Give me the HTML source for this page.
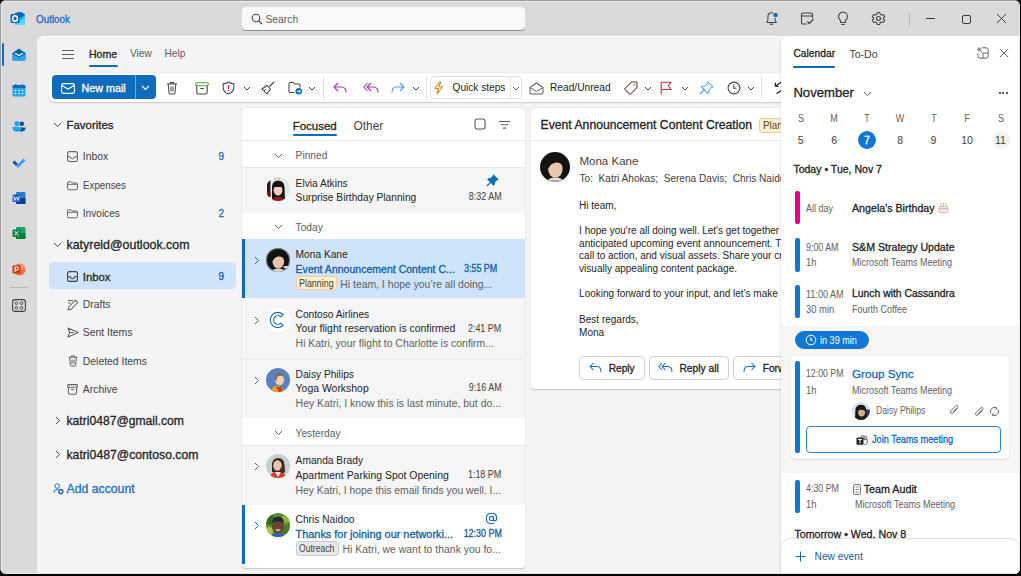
<!DOCTYPE html>
<html><head><meta charset="utf-8">
<style>
*{box-sizing:border-box;margin:0;padding:0}
html,body{width:1021px;height:576px;overflow:hidden;background:#000;font-family:"Liberation Sans",sans-serif;color:#242424}
.a{position:absolute}
.t{position:absolute;white-space:nowrap;line-height:14px;height:14px;margin-top:0.9px}
#win{position:absolute;left:0;top:0;width:1020px;height:574px;border-radius:6px;background:#dadada;overflow:hidden;box-shadow:inset 0 0 0 1px #9c9c9c}
#win2{position:absolute;left:1px;top:1px;right:0;bottom:0;border-radius:5px;box-shadow:inset 0 0 0 1px #e9e9e9}
svg{position:absolute;overflow:visible}
</style></head>
<body>
<div id="win">
  
  <!-- TITLE BAR -->
  <svg style="left:10px;top:11px" width="16" height="15" viewBox="0 0 16 15">
    <path d="M5 2 L11 1 L15 3.5 L15 13 Q15 14 14 14 L6 14 Q5 14 5 13Z" fill="#28a8ea"/>
    <path d="M5 2 L11 1 L15 3.5 L10 7 L5 5Z" fill="#0364b8"/>
    <path d="M5 14 L15 6 L15 13 Q15 14 14 14Z" fill="#50d9ff"/>
    <rect x="0.5" y="3" width="9" height="9" rx="1" fill="#0f6cbd"/>
    <ellipse cx="5" cy="7.5" rx="2.4" ry="2.8" fill="none" stroke="#fff" stroke-width="1.4"/>
  </svg>
  <div class="t" style="left:36px;top:12px;font-size:10.0px;font-weight:400;-webkit-text-stroke:0.3px #1a6dbd;color:#1a6dbd;transform:scaleX(0.9860);transform-origin:left center">Outlook</div>
  <div class="a" style="left:242px;top:7px;width:283px;height:23px;background:#f9f9f9;border-radius:4px;box-shadow:0 1px 0 #8d8d8d, 0 0 0 0.5px #e2e2e2"></div>
  <svg style="left:251px;top:13px" width="12" height="12" viewBox="0 0 12 12"><circle cx="5" cy="5" r="3.8" fill="none" stroke="#424242" stroke-width="1.1"/><path d="M7.8 7.8 L11 11" stroke="#424242" stroke-width="1.2"/></svg>
  <div class="t" style="left:265.5px;top:12px;font-size:10.3px;color:#5c5c5c">Search</div>
  <!-- bell -->
  <svg style="left:765px;top:11px" width="14" height="15" viewBox="0 0 14 15"><path d="M6.5 1.8 C4.3 1.8 2.9 3.6 2.9 5.9 L2.9 8.9 L1.8 11.4 L11.2 11.4 L10.1 8.9 L10.1 5.9 C10.1 3.6 8.7 1.8 6.5 1.8Z" fill="none" stroke="#424242" stroke-width="1.05" stroke-linejoin="round"/><path d="M4.9 12.7 Q6.5 14.3 8.1 12.7" fill="none" stroke="#424242" stroke-width="1.05"/><circle cx="10.6" cy="3.9" r="3" fill="#dadada"/><circle cx="10.6" cy="3.9" r="2.2" fill="#0f6cbd"/></svg>
  <!-- calendar check -->
  <svg style="left:800px;top:11px" width="15" height="15" viewBox="0 0 15 15"><path d="M7 13 L3 13 Q1.5 13 1.5 11.5 L1.5 3.5 Q1.5 2 3 2 L11 2 Q12.5 2 12.5 3.5 L12.5 7" fill="none" stroke="#424242" stroke-width="1.1"/><path d="M1.5 5 L12.5 5" stroke="#424242" stroke-width="1.1"/><path d="M7.5 10.5 L9.3 12.5 L13.5 8" fill="none" stroke="#424242" stroke-width="1.2"/></svg>
  <!-- bulb -->
  <svg style="left:837px;top:11px" width="12" height="15" viewBox="0 0 12 15"><path d="M6 1.3 C3.2 1.3 1.5 3.3 1.5 5.6 C1.5 7.6 3 8.6 3.6 10 L3.8 11.5 L8.2 11.5 L8.4 10 C9 8.6 10.5 7.6 10.5 5.6 C10.5 3.3 8.8 1.3 6 1.3Z" fill="none" stroke="#424242" stroke-width="1.1"/><path d="M4.3 13.5 L7.7 13.5" stroke="#424242" stroke-width="1.1"/></svg>
  <!-- gear -->
  <svg style="left:871px;top:11px" width="15" height="15" viewBox="0 0 15 15"><path d="M6.2 1.5 L8.8 1.5 L9.2 3.3 L10.6 4.1 L12.4 3.5 L13.7 5.8 L12.3 7 L12.3 8 L13.7 9.2 L12.4 11.5 L10.6 10.9 L9.2 11.7 L8.8 13.5 L6.2 13.5 L5.8 11.7 L4.4 10.9 L2.6 11.5 L1.3 9.2 L2.7 8 L2.7 7 L1.3 5.8 L2.6 3.5 L4.4 4.1 L5.8 3.3Z" fill="none" stroke="#424242" stroke-width="1.05" stroke-linejoin="round"/><circle cx="7.5" cy="7.5" r="2" fill="none" stroke="#424242" stroke-width="1.05"/></svg>
  <div class="a" style="left:909px;top:13px;width:1px;height:13px;background:#b5b5b5"></div>
  <div class="a" style="left:926px;top:18px;width:9px;height:1px;background:#3a3a3a"></div>
  <div class="a" style="left:961.5px;top:14.5px;width:9px;height:9px;border:1px solid #3a3a3a;border-radius:2px"></div>
  <svg style="left:996px;top:13px" width="11" height="11" viewBox="0 0 11 11"><path d="M1 1 L10 10 M10 1 L1 10" stroke="#3a3a3a" stroke-width="1"/></svg>

  <!-- LEFT RAIL -->
  <div class="a" style="left:2px;top:43px;width:2px;height:23px;background:#0f6cbd;border-radius:1px"></div>
  <svg style="left:12px;top:48px" width="14" height="13" viewBox="0 0 14 13"><path d="M0.5 5 L7 0.5 L13.5 5 L13.5 11.5 Q13.5 12.5 12.5 12.5 L1.5 12.5 Q0.5 12.5 0.5 11.5Z" fill="#0a5fb6"/><path d="M0.5 6 L7 9.5 L13.5 6 L13.5 11.5 Q13.5 12.5 12.5 12.5 L1.5 12.5 Q0.5 12.5 0.5 11.5Z" fill="#28a8ea"/><path d="M3 5.3 L7 7.6 L11 5.3" fill="none" stroke="#fff" stroke-width="1.3"/></svg>
  <svg style="left:12px;top:84px" width="14" height="13" viewBox="0 0 14 13"><rect x="0.5" y="1" width="13" height="11.5" rx="1.5" fill="#28a8ea"/><rect x="0.5" y="1" width="13" height="3" rx="1" fill="#0f6cbd"/><g fill="#fff"><circle cx="3.5" cy="6.5" r=".8"/><circle cx="7" cy="6.5" r=".8"/><circle cx="10.5" cy="6.5" r=".8"/><circle cx="3.5" cy="9.5" r=".8"/><circle cx="7" cy="9.5" r=".8"/><circle cx="10.5" cy="9.5" r=".8"/></g><rect x="3" y="0" width="1.4" height="2.5" fill="#0f6cbd"/><rect x="9.6" y="0" width="1.4" height="2.5" fill="#0f6cbd"/></svg>
  <svg style="left:12px;top:121px" width="14" height="11" viewBox="0 0 14 11"><circle cx="9.8" cy="2.8" r="2.3" fill="#0f4c9e"/><path d="M7.5 6.5 L13.5 6.5 Q13.8 10 10 10.5 L7.5 10.5Z" fill="#0f4c9e"/><circle cx="5" cy="2.6" r="2.6" fill="#2aa0e8"/><path d="M0.5 6.5 Q0.5 5.8 1.3 5.8 L8.7 5.8 Q9.5 5.8 9.5 6.5 Q9.5 10.8 5 10.8 Q0.5 10.8 0.5 6.5Z" fill="#2aa0e8"/></svg>
  <svg style="left:12px;top:156px" width="14" height="12" viewBox="0 0 14 12"><path d="M0.5 6.5 L2.5 4.5 L6 8 L4 10Z" fill="#0f4ea6"/><path d="M4 10 L11.5 2.5 L13.5 4.5 L6 12 Z" fill="#36a3f0"/></svg>
  <svg style="left:12px;top:192px" width="14" height="12" viewBox="0 0 14 12"><rect x="4" y="0" width="9.5" height="12" rx="1" fill="#2b7cd3"/><rect x="4" y="6" width="9.5" height="6" rx="1" fill="#103f91"/><rect x="0.5" y="2.5" width="8" height="7.5" rx="1" fill="#185abd"/><path d="M1.7 4 L2.8 8.5 L4.5 5 L6.2 8.5 L7.3 4" fill="none" stroke="#fff" stroke-width=".9"/></svg>
  <svg style="left:12px;top:227px" width="14" height="12" viewBox="0 0 14 12"><rect x="4" y="0" width="9.5" height="12" rx="1" fill="#21a366"/><rect x="4" y="6" width="9.5" height="6" rx="1" fill="#107c41"/><rect x="0.5" y="2.5" width="8" height="7.5" rx="1" fill="#107c41"/><path d="M2.5 4 L6.5 8.5 M6.5 4 L2.5 8.5" fill="none" stroke="#fff" stroke-width="1"/></svg>
  <svg style="left:12px;top:263px" width="14" height="13" viewBox="0 0 14 13"><circle cx="7.5" cy="6.5" r="6" fill="#ed6c47"/><path d="M7.5 0.5 A6 6 0 0 1 13.5 6.5 L7.5 6.5Z" fill="#ff8f6b"/><rect x="0.5" y="2.5" width="8" height="8" rx="1" fill="#c43e1c"/><path d="M3 9 L3 4 L5 4 Q6.5 4 6.5 5.5 Q6.5 7 5 7 L3 7" fill="none" stroke="#fff" stroke-width="1"/></svg>
  <div class="a" style="left:10px;top:287px;width:18px;height:1px;background:#b9b9b9"></div>
  <svg style="left:12px;top:299px" width="14" height="13" viewBox="0 0 14 13"><rect x="0.6" y="0.6" width="12.8" height="11.8" rx="2.5" fill="none" stroke="#424242" stroke-width="1.1"/><g fill="none" stroke="#424242" stroke-width=".9"><rect x="3.2" y="3" width="2.6" height="2.4" rx="1"/><rect x="8.2" y="3" width="2.6" height="2.4" rx="1"/><rect x="3.2" y="7.6" width="2.6" height="2.4" rx="1"/><circle cx="9.5" cy="8.8" r="1.3"/></g></svg>

  <!-- main area -->
  <div class="a" style="left:37px;top:36px;width:983px;height:538px;background:#f4f4f4;border-top-left-radius:7px;box-shadow:inset 0 1px 0 rgba(255,255,255,.6)"></div>
  <!-- toolbar -->
  <div class="a" style="left:49px;top:73px;width:740px;height:29px;background:#fff;border-radius:5px;box-shadow:0 0.5px 1.5px rgba(0,0,0,.18)"></div>

  <!-- RIBBON TABS -->
  <div class="a" style="left:62px;top:49.5px;width:12px;height:1.2px;background:#616161"></div>
  <div class="a" style="left:62px;top:53.7px;width:12px;height:1.2px;background:#616161"></div>
  <div class="a" style="left:62px;top:57.9px;width:12px;height:1.2px;background:#616161"></div>
  <div class="t" style="left:89px;top:46.6px;font-size:10.52px;font-weight:400;-webkit-text-stroke:0.3px #242424;color:#242424">Home</div>
  <div class="a" style="left:89px;top:65px;width:29px;height:2px;background:#0f6cbd;border-radius:1px"></div>
  <div class="t" style="left:130px;top:46.6px;font-size:10.2px;color:#5c5c5c">View</div>
  <div class="t" style="left:164.5px;top:46.6px;font-size:10.1px;color:#5c5c5c">Help</div>
  <!-- TOOLBAR -->
  <div class="a" style="left:52px;top:75px;width:104px;height:24px;background:#0f6cbd;border-radius:4px"></div>
  <div class="a" style="left:135px;top:75px;width:1px;height:24px;background:#6ea3d9"></div>
  <svg style="left:61px;top:82.8px" width="14" height="11" viewBox="0 0 14 11"><rect x="0.6" y="0.6" width="12.8" height="9.8" rx="1.8" fill="none" stroke="#fff" stroke-width="1.1"/><path d="M1 2.5 L7 6 L13 2.5" fill="none" stroke="#fff" stroke-width="1.1"/></svg>
  <div class="t" style="left:81.5px;top:80.3px;font-size:10.75px;font-weight:400;-webkit-text-stroke:0.3px #fff;color:#fff">New mail</div>
  <svg style="left:141px;top:84.8px" width="9" height="6" viewBox="0 0 9 6"><path d="M1 1 L4.5 4.5 L8 1" fill="none" stroke="#fff" stroke-width="1.1"/></svg>
  <!-- trash -->
  <svg style="left:166px;top:80.8px" width="12" height="14" viewBox="0 0 12 14"><path d="M1 3 L11 3 M4.3 3 L4.3 1.5 L7.7 1.5 L7.7 3 M2.2 3 L3 12 Q3.1 13 4 13 L8 13 Q8.9 13 9 12 L9.8 3" fill="none" stroke="#424242" stroke-width="1.05"/><path d="M5 5.5 L5 10.5 M7 5.5 L7 10.5" stroke="#424242" stroke-width="1"/></svg>
  <!-- archive -->
  <svg style="left:195px;top:81.8px" width="14" height="13" viewBox="0 0 14 13"><rect x="0.8" y="0.8" width="12.4" height="3" rx="1" fill="none" stroke="#5ba33b" stroke-width="1.1"/><path d="M1.8 3.8 L1.8 10.5 Q1.8 12 3.3 12 L10.7 12 Q12.2 12 12.2 10.5 L12.2 3.8" fill="none" stroke="#424242" stroke-width="1.05"/><path d="M5.2 6.5 L8.8 6.5" stroke="#424242" stroke-width="1.05"/></svg>
  <!-- shield -->
  <svg style="left:222px;top:80.8px" width="13" height="14" viewBox="0 0 13 14"><path d="M6.5 1 Q3.8 2.8 1.2 2.8 L1.2 6.8 Q1.2 11 6.5 13 Q11.8 11 11.8 6.8 L11.8 2.8 Q9.2 2.8 6.5 1Z" fill="none" stroke="#424242" stroke-width="1.05"/><path d="M6.5 4.2 L6.5 8" stroke="#c50f1f" stroke-width="1.2"/><circle cx="6.5" cy="9.8" r=".7" fill="#c50f1f"/></svg>
  <svg style="left:243px;top:85.8px" width="8" height="5" viewBox="0 0 8 5"><path d="M1 1 L4 4 L7 1" fill="none" stroke="#424242" stroke-width="1"/></svg>
  <!-- sweep -->
  <svg style="left:261px;top:80.8px" width="14" height="14" viewBox="0 0 14 14"><path d="M13 1 L8.5 5.5" stroke="#424242" stroke-width="1.1"/><path d="M6 4.5 L9.5 8 L6 13 L1 8Z" fill="none" stroke="#424242" stroke-width="1.05" stroke-linejoin="round"/><path d="M3 10 L4.5 8.5" stroke="#424242" stroke-width="1"/></svg>
  <!-- move folder -->
  <svg style="left:288px;top:80.8px" width="15" height="14" viewBox="0 0 15 14"><path d="M6.5 11.5 L2.5 11.5 Q1 11.5 1 10 L1 3 Q1 1.5 2.5 1.5 L5 1.5 L6.5 3 L10.5 3 Q12 3 12 4.5 L12 6.5" fill="none" stroke="#424242" stroke-width="1.05"/><circle cx="10.8" cy="10.3" r="3.3" fill="#0f6cbd"/><path d="M9 10.3 L12.3 10.3 M11 8.8 L12.5 10.3 L11 11.8" fill="none" stroke="#fff" stroke-width=".9"/></svg>
  <svg style="left:308px;top:85.8px" width="8" height="5" viewBox="0 0 8 5"><path d="M1 1 L4 4 L7 1" fill="none" stroke="#424242" stroke-width="1"/></svg>
  <div class="a" style="left:322.5px;top:76px;width:1px;height:23px;background:#e0e0e0"></div>
  <!-- reply -->
  <svg style="left:333px;top:81.8px" width="14" height="12" viewBox="0 0 14 12"><path d="M5 1 L1 5 L5 9 M1 5 L8.5 5 Q13 5 13 10.5" fill="none" stroke="#a53bb5" stroke-width="1.1" stroke-linejoin="round"/></svg>
  <!-- reply all -->
  <svg style="left:363px;top:81.8px" width="16" height="12" viewBox="0 0 16 12"><path d="M4.5 1 L0.8 5 L4.5 9 M8 1 L4 5 L8 9 M4 5 L10.5 5 Q15 5 15 10.5" fill="none" stroke="#a53bb5" stroke-width="1.1" stroke-linejoin="round"/></svg>
  <!-- forward -->
  <svg style="left:391px;top:81.8px" width="14" height="12" viewBox="0 0 14 12"><path d="M9 1 L13 5 L9 9 M13 5 L5.5 5 Q1 5 1 10.5" fill="none" stroke="#4a9ee8" stroke-width="1.1" stroke-linejoin="round"/></svg>
  <svg style="left:412px;top:85.8px" width="8" height="5" viewBox="0 0 8 5"><path d="M1 1 L4 4 L7 1" fill="none" stroke="#424242" stroke-width="1"/></svg>
  <div class="a" style="left:425.5px;top:76px;width:1px;height:23px;background:#e0e0e0"></div>
  <!-- quick steps -->
  <div class="a" style="left:429.5px;top:75.5px;width:92.5px;height:23px;border:1px solid #e3e3e3;border-radius:4px"></div>
  <div class="a" style="left:509.5px;top:76px;width:1px;height:22px;background:#e3e3e3"></div>
  <svg style="left:433px;top:80.8px" width="11" height="14" viewBox="0 0 11 14"><path d="M6.5 1 L2 7.5 L5.5 7.5 L4 13 L9.5 5.8 L6 5.8 L7.8 1Z" fill="none" stroke="#c98a1a" stroke-width="1.05" stroke-linejoin="round"/></svg>
  <div class="t" style="left:452.5px;top:80.6px;font-size:10.15px;color:#242424">Quick steps</div>
  <svg style="left:512px;top:85.8px" width="8" height="5" viewBox="0 0 8 5"><path d="M1 1 L4 4 L7 1" fill="none" stroke="#616161" stroke-width="1"/></svg>
  <!-- read/unread -->
  <svg style="left:529px;top:81.8px" width="15" height="13" viewBox="0 0 15 13"><path d="M1 5.5 L7.5 1 L14 5.5 L14 10.5 Q14 12 12.5 12 L2.5 12 Q1 12 1 10.5Z" fill="none" stroke="#616161" stroke-width="1.05" stroke-linejoin="round"/><path d="M1.5 6 L7.5 9.3 L13.5 6" fill="none" stroke="#616161" stroke-width="1"/></svg>
  <div class="t" style="left:550px;top:80.6px;font-size:10.2px;color:#242424">Read/Unread</div>
  <!-- tag -->
  <svg style="left:624px;top:80.8px" width="14" height="14" viewBox="0 0 14 14"><path d="M7.5 1 L12.5 1 Q13 1 13 1.5 L13 6.5 L6.5 13 Q6 13.5 5.5 13 L1 8.5 Q0.5 8 1 7.5Z" fill="none" stroke="#424242" stroke-width="1.05" stroke-linejoin="round"/><circle cx="10.3" cy="3.7" r=".9" fill="#e8590c"/></svg>
  <svg style="left:644px;top:85.8px" width="8" height="5" viewBox="0 0 8 5"><path d="M1 1 L4 4 L7 1" fill="none" stroke="#424242" stroke-width="1"/></svg>
  <!-- flag -->
  <svg style="left:660px;top:80.8px" width="12" height="14" viewBox="0 0 12 14"><path d="M1.2 13.5 L1.2 1.2 L11 1.2 L8.3 4.8 L11 8.5 L1.2 8.5" fill="none" stroke="#c4314b" stroke-width="1.1" stroke-linejoin="round"/></svg>
  <svg style="left:681px;top:85.8px" width="8" height="5" viewBox="0 0 8 5"><path d="M1 1 L4 4 L7 1" fill="none" stroke="#424242" stroke-width="1"/></svg>
  <!-- pin -->
  <svg style="left:699px;top:80.8px" width="15" height="14" viewBox="0 0 15 14"><path d="M9 1 L14 6 L12.5 6.5 L10 9 L9.8 11.5 L8.8 12.3 L2.7 6.2 L3.5 5.2 L6 5 L8.5 2.5Z" fill="none" stroke="#479ef5" stroke-width="1.05" stroke-linejoin="round"/><path d="M5.3 8.7 L1 13" stroke="#479ef5" stroke-width="1.1"/></svg>
  <!-- clock -->
  <svg style="left:727px;top:80.8px" width="14" height="14" viewBox="0 0 14 14"><circle cx="7" cy="7" r="5.9" fill="none" stroke="#424242" stroke-width="1.1"/><path d="M6.8 3.5 L6.8 7.3 L9.3 7.3" fill="none" stroke="#424242" stroke-width="1.05"/></svg>
  <svg style="left:747px;top:85.8px" width="8" height="5" viewBox="0 0 8 5"><path d="M1 1 L4 4 L7 1" fill="none" stroke="#424242" stroke-width="1"/></svg>
  <div class="a" style="left:760.5px;top:75.5px;width:1px;height:23px;background:#e0e0e0"></div>
  <svg style="left:770px;top:78.8px" width="14" height="18" viewBox="0 0 14 18"><path d="M11.5 3 L5.5 7 M5.5 3.8 L5.3 7.1 L8.6 7.3" fill="none" stroke="#242424" stroke-width="1.2"/><path d="M6.5 14.8 L11.5 11.2" stroke="#242424" stroke-width="1.1"/></svg>


  <!-- FOLDER PANE -->
  <svg style="left:53px;top:122px" width="9" height="6" viewBox="0 0 9 6"><path d="M1 1 L4.5 4.5 L8 1" fill="none" stroke="#424242" stroke-width="1"/></svg>
  <div class="t" style="left:66.5px;top:117.2px;font-size:11.46px;font-weight:400;-webkit-text-stroke:0.3px #242424;color:#242424">Favorites</div>
  <!-- inbox fav -->
  <svg style="left:67px;top:151px" width="11" height="11" viewBox="0 0 11 11"><rect x="0.6" y="0.6" width="9.8" height="9.8" rx="2" fill="none" stroke="#616161" stroke-width="1.05"/><path d="M0.8 5.8 L3.5 5.8 Q3.8 7.8 5.5 7.8 Q7.2 7.8 7.5 5.8 L10.2 5.8" fill="none" stroke="#616161" stroke-width="1"/></svg>
  <div class="t" style="left:82.8px;top:149.5px;font-size:10.4px;color:#424242">Inbox</div>
  <div class="t" style="left:218.5px;top:149.5px;font-size:10.00px;font-weight:400;-webkit-text-stroke:0.3px #1d6fc0;color:#1d6fc0">9</div>
  <svg style="left:67px;top:180.5px" width="11" height="9.5" viewBox="0 0 12 10"><path d="M0.6 2 Q0.6 0.6 2 0.6 L4.3 0.6 L5.6 2 L10 2 Q11.4 2 11.4 3.4 L11.4 8 Q11.4 9.4 10 9.4 L2 9.4 Q0.6 9.4 0.6 8Z M0.6 3.4 L11.4 3.4" fill="none" stroke="#616161" stroke-width="1.05"/></svg>
  <div class="t" style="left:82.8px;top:178.5px;font-size:10.0px;color:#424242;transform:scaleX(0.9750);transform-origin:left center">Expenses</div>
  <svg style="left:67px;top:208.5px" width="11" height="9.5" viewBox="0 0 12 10"><path d="M0.6 2 Q0.6 0.6 2 0.6 L4.3 0.6 L5.6 2 L10 2 Q11.4 2 11.4 3.4 L11.4 8 Q11.4 9.4 10 9.4 L2 9.4 Q0.6 9.4 0.6 8Z M0.6 3.4 L11.4 3.4" fill="none" stroke="#616161" stroke-width="1.05"/></svg>
  <div class="t" style="left:82.8px;top:206.5px;font-size:10.1px;color:#424242">Invoices</div>
  <div class="t" style="left:218.5px;top:206.5px;font-size:10.00px;font-weight:400;-webkit-text-stroke:0.3px #1d6fc0;color:#1d6fc0">2</div>
  <!-- account -->
  <svg style="left:53px;top:242px" width="9" height="6" viewBox="0 0 9 6"><path d="M1 1 L4.5 4.5 L8 1" fill="none" stroke="#424242" stroke-width="1"/></svg>
  <div class="t" style="left:66.5px;top:237.5px;font-size:12.43px;font-weight:400;-webkit-text-stroke:0.3px #242424;color:#242424">katyreid@outlook.com</div>
  <div class="a" style="left:48.5px;top:262px;width:187.5px;height:27px;background:#cfe4fa;border-radius:4px"></div>
  <svg style="left:67px;top:270.5px" width="11" height="11" viewBox="0 0 11 11"><rect x="0.6" y="0.6" width="9.8" height="9.8" rx="2" fill="none" stroke="#424242" stroke-width="1.1"/><path d="M0.8 5.8 L3.5 5.8 Q3.8 7.8 5.5 7.8 Q7.2 7.8 7.5 5.8 L10.2 5.8" fill="none" stroke="#424242" stroke-width="1.05"/></svg>
  <div class="t" style="left:82.8px;top:269px;font-size:11.34px;font-weight:400;-webkit-text-stroke:0.3px #242424;color:#242424">Inbox</div>
  <div class="t" style="left:218.5px;top:269px;font-size:10.00px;font-weight:400;-webkit-text-stroke:0.3px #115ea3;color:#115ea3">9</div>
  <svg style="left:66.5px;top:298.5px" width="12" height="12" viewBox="0 0 12 12"><path d="M8.5 1.2 L10.8 3.5 L4 10.3 L1 11 L1.7 8Z M1 1.5 L6 1.5 M1 4 L3.5 4" fill="none" stroke="#616161" stroke-width="1.05" stroke-linejoin="round"/></svg>
  <div class="t" style="left:82.8px;top:297.5px;font-size:10.4px;color:#424242">Drafts</div>
  <svg style="left:66.5px;top:327px" width="12" height="11" viewBox="0 0 12 11"><path d="M1 1 L11.2 5.5 L1 10 L2.6 5.5Z M2.6 5.5 L7 5.5" fill="none" stroke="#616161" stroke-width="1.05" stroke-linejoin="round"/></svg>
  <div class="t" style="left:82.8px;top:325.5px;font-size:10.4px;color:#424242">Sent Items</div>
  <svg style="left:67.5px;top:355px" width="10" height="12" viewBox="0 0 10 12"><path d="M0.6 2.2 L9.4 2.2 M3.5 2.2 L3.5 0.9 L6.5 0.9 L6.5 2.2 M1.6 2.2 L2.3 10 Q2.4 11 3.3 11 L6.7 11 Q7.6 11 7.7 10 L8.4 2.2 M4 4.5 L4 8.8 M6 4.5 L6 8.8" fill="none" stroke="#616161" stroke-width="1"/></svg>
  <div class="t" style="left:82.8px;top:354px;font-size:10.4px;color:#424242">Deleted Items</div>
  <svg style="left:67px;top:384px" width="11" height="11" viewBox="0 0 11 11"><rect x="0.6" y="0.6" width="9.8" height="2.6" rx=".8" fill="none" stroke="#616161" stroke-width="1.05"/><path d="M1.4 3.2 L1.4 8.8 Q1.4 10.2 2.8 10.2 L8.2 10.2 Q9.6 10.2 9.6 8.8 L9.6 3.2 M4 5.5 L7 5.5" fill="none" stroke="#616161" stroke-width="1.05"/></svg>
  <div class="t" style="left:82.8px;top:382.5px;font-size:10.4px;color:#424242">Archive</div>
  <svg style="left:55px;top:416px" width="6" height="9" viewBox="0 0 6 9"><path d="M1 1 L4.5 4.5 L1 8" fill="none" stroke="#424242" stroke-width="1"/></svg>
  <div class="t" style="left:66.5px;top:413.5px;font-size:12.13px;font-weight:400;-webkit-text-stroke:0.3px #242424;color:#242424">katri0487@gmail.com</div>
  <svg style="left:55px;top:450px" width="6" height="9" viewBox="0 0 6 9"><path d="M1 1 L4.5 4.5 L1 8" fill="none" stroke="#424242" stroke-width="1"/></svg>
  <div class="t" style="left:66.5px;top:447px;font-size:12.23px;font-weight:400;-webkit-text-stroke:0.3px #242424;color:#242424">katri0487@contoso.com</div>
  <svg style="left:52.5px;top:483px" width="11" height="12" viewBox="0 0 11 12"><circle cx="4.2" cy="3" r="2.3" fill="none" stroke="#1d6fc0" stroke-width="1"/><path d="M0.8 10 Q0.8 6.5 4.2 6.5 L5 6.5" fill="none" stroke="#1d6fc0" stroke-width="1"/><circle cx="7.8" cy="8.6" r="2.8" fill="#1d6fc0"/><path d="M7.8 7 L7.8 10.2 M6.2 8.6 L9.4 8.6" stroke="#fff" stroke-width=".9"/></svg>
  <div class="t" style="left:66.5px;top:481.2px;font-size:12.25px;font-weight:400;-webkit-text-stroke:0.3px #1d6fc0;color:#1d6fc0">Add account</div>

  <!-- message list card -->
  <div class="a" style="left:242px;top:108px;width:283px;height:460px;background:#fff;border-radius:4px;box-shadow:0 0.5px 1.5px rgba(0,0,0,.2);overflow:hidden" id="ml"></div>
<!-- ML START -->
<div class="t" style="left:292.7px;top:118.3px;font-size:11.47px;font-weight:400;-webkit-text-stroke:0.3px #242424;color:#242424;">Focused</div>
<div class="a" style="left:292.5px;top:133.7px;width:44.5px;height:2px;background:#0f6cbd;border-radius:1px"></div>
<div class="t" style="left:353.5px;top:118.3px;font-size:11.9px;color:#424242;">Other</div>
<svg style="left:474px;top:117.5px" width="14" height="14" viewBox="0 0 14 14"><rect x="2.5" y="2.5" width="10" height="10" rx="2.5" fill="#e6e6e6"/><rect x="1" y="1" width="10" height="10" rx="2.5" fill="#fff" stroke="#616161" stroke-width="1.1"/></svg>
<svg style="left:498px;top:119.5px" width="13" height="11" viewBox="0 0 13 11"><path d="M1 1.5 L12 1.5 M2.8 4.8 L10.2 4.8 M4.8 8.1 L8.2 8.1" stroke="#616161" stroke-width="1.05"/></svg>
<div class="a" style="left:242px;top:140px;width:283px;height:1px;background:#e6e6e6;"></div>
<svg style="left:273.5px;top:152.5px" width="9" height="6" viewBox="0 0 9 6"><path d="M1 1 L4.5 4.5 L8 1" fill="none" stroke="#616161" stroke-width="1"/></svg>
<div class="t" style="left:295.6px;top:148.5px;font-size:10.2px;color:#616161;">Pinned</div>
<div class="a" style="left:242px;top:167px;width:283px;height:46px;background:#f5f5f5;border-top:1px solid #e9e9e9"></div>
<svg style="left:265.5px;top:176.6px" width="24" height="24" viewBox="0 0 24 24"><defs><clipPath id="avelvia277188"><circle cx="12" cy="12" r="12"/></clipPath></defs><g clip-path="url(#avelvia277188)"><rect width="24" height="24" fill="#f6f5f0"/><rect x="16" y="0" width="8" height="24" fill="#dcebe0"/><path d="M1 6 L4.5 3 L4.5 20 L1 20Z" fill="#2a1d1d"/><rect x="1" y="15" width="3.5" height="5" fill="#7a1a1a"/>
        <path d="M6 22 L6 10 Q6 3.5 12 3.5 Q18 3.5 18.5 10 L19 22Z" fill="#1b1414"/><ellipse cx="12" cy="13.2" rx="4.4" ry="5.4" fill="#efd0c0"/><path d="M7.3 10 Q7.5 5.6 12 5.6 Q16.5 5.6 16.7 10Z" fill="#1b1414"/>
        <path d="M6 24 Q7 19.5 12 19.8 Q17 19.5 18 24Z" fill="#8e1b1b"/><rect x="8" y="0.3" width="2" height="2.6" fill="#b7c3f0"/><rect x="10" y="0.3" width="2" height="2.6" fill="#f5e27a"/><rect x="12" y="0.3" width="2" height="2.6" fill="#f0a7b8"/><rect x="14" y="0.3" width="2" height="2.6" fill="#cfeadf"/></g></svg>
<div class="t" style="left:295.6px;top:176.0px;font-size:10.2px;color:#242424;">Elvia Atkins</div>
<div class="t" style="left:295.6px;top:190.2px;font-size:10.2px;color:#242424;">Surprise Birthday Planning</div>
<svg style="left:486px;top:174px" width="13" height="13" viewBox="0 0 13 13"><path d="M7.5 0.8 L12.2 5.5 L10.8 6 L8.7 8.2 L8.5 10.6 L7.6 11.4 L1.6 5.4 L2.4 4.5 L4.8 4.3 L7 2.2Z" fill="#0f6cbd" stroke="#0f6cbd" stroke-width="0.8" stroke-linejoin="round"/><path d="M4.5 8.5 L1 12" stroke="#0f6cbd" stroke-width="1.3"/></svg>
<div class="t" style="right:518.5px;top:189.6px;font-size:10.0px;color:#424242;;transform:scaleX(0.8950);transform-origin:right center">8:32 AM</div>
<svg style="left:273.5px;top:224px" width="9" height="6" viewBox="0 0 9 6"><path d="M1 1 L4.5 4.5 L8 1" fill="none" stroke="#616161" stroke-width="1"/></svg>
<div class="t" style="left:295.6px;top:220.0px;font-size:10.2px;color:#616161;">Today</div>
<div class="a" style="left:242px;top:239px;width:283px;height:59px;background:#cfe4fa;"></div>
<div class="a" style="left:242px;top:239px;width:3px;height:59px;background:#0f6cbd;"></div>
<svg style="left:253.8px;top:255.5px" width="6" height="9" viewBox="0 0 6 9"><path d="M1 1 L4.5 4.5 L1 8" fill="none" stroke="#0f6cbd" stroke-width="1"/></svg>
<svg style="left:265.5px;top:247.60000000000002px" width="24" height="24" viewBox="0 0 24 24"><defs><clipPath id="avmona277259"><circle cx="12" cy="12" r="12"/></clipPath></defs><g clip-path="url(#avmona277259)"><rect width="24" height="24" fill="#131313"/><ellipse cx="12.3" cy="13.6" rx="5.8" ry="7" fill="#e9c6ab"/><path d="M5.5 13 Q5.5 4.3 12.3 4.5 Q19 4.7 18.8 12 Q16.5 7.8 12 8.6 Q8.5 9.2 6.8 13Z" fill="#131313"/>
        <path d="M5 24 Q7.5 20.3 12.3 20.5 Q17 20.3 19.5 24Z" fill="#ecdcd0"/><rect x="4" y="22.6" width="16" height="1.6" fill="#9597bf"/><path d="M17.5 18.5 Q20 17.5 22.5 18.5 L22.5 20 L17.5 20Z" fill="#eeeeee"/><circle cx="12" cy="12" r="11.6" fill="none" stroke="#fff" stroke-opacity=".6" stroke-width=".8"/></g></svg>
<div class="t" style="left:295.6px;top:247.2px;font-size:10.2px;color:#242424;">Mona Kane</div>
<div class="t" style="left:295.6px;top:261.0px;font-size:10.54px;font-weight:400;-webkit-text-stroke:0.3px #115ea3;color:#115ea3;">Event Announcement Content C...</div>
<div class="t" style="right:522.5px;top:261.4px;font-size:10.0px;font-weight:400;-webkit-text-stroke:0.3px #115ea3;color:#115ea3;;transform:scaleX(0.8930);transform-origin:right center">3:55 PM</div>
<div class="a" style="left:295.6px;top:275.5px;width:41.8px;height:14.7px;background:#fcefd2;border:1px solid #f1cf8b;border-radius:3px"></div>
<div class="t" style="left:299.3px;top:276.0px;font-size:10.0px;color:#4d3b12;;transform:scaleX(0.8900);transform-origin:left center">Planning</div>
<div class="t" style="left:340.3px;top:277.0px;font-size:10.4px;color:#616161;">Hi team, I hope you’re all doing...</div>
<div class="a" style="left:242px;top:298px;width:283px;height:61px;background:#f5f5f5;"></div>
<svg style="left:253.8px;top:315.5px" width="6" height="9" viewBox="0 0 6 9"><path d="M1 1 L4.5 4.5 L1 8" fill="none" stroke="#616161" stroke-width="1"/></svg>
<svg style="left:265.5px;top:308.0px" width="24" height="24" viewBox="0 0 24 24"><defs><clipPath id="avcontoso277320"><circle cx="12" cy="12" r="12"/></clipPath></defs><g clip-path="url(#avcontoso277320)"><rect width="24" height="24" fill="#ffffff"/><path d="M17.2 6.6 A7.6 7.6 0 1 0 17.2 17.4 L14.9 15.1 A4.3 4.3 0 1 1 14.9 8.9 Z" fill="none" stroke="#1e6fa8" stroke-width="1.15" stroke-linejoin="round"/></g></svg>
<div class="t" style="left:295.6px;top:307.2px;font-size:10.2px;color:#242424;">Contoso Airlines</div>
<div class="t" style="left:295.6px;top:321.3px;font-size:10.45px;color:#242424;">Your flight reservation is confirmed</div>
<div class="t" style="right:518.5px;top:320.7px;font-size:10.0px;color:#424242;;transform:scaleX(0.8950);transform-origin:right center">2:41 PM</div>
<div class="t" style="left:295.6px;top:336.3px;font-size:10.45px;color:#616161;">Hi Katri, your flight to Charlotte is confirm...</div>
<div class="a" style="left:242px;top:359px;width:283px;height:59px;background:#f5f5f5;border-top:1px solid #ebebeb"></div>
<svg style="left:253.8px;top:375.5px" width="6" height="9" viewBox="0 0 6 9"><path d="M1 1 L4.5 4.5 L1 8" fill="none" stroke="#616161" stroke-width="1"/></svg>
<svg style="left:265.5px;top:367.5px" width="24" height="24" viewBox="0 0 24 24"><defs><clipPath id="avdaisy277379"><circle cx="12" cy="12" r="12"/></clipPath></defs><g clip-path="url(#avdaisy277379)"><rect width="24" height="24" fill="#5a82c0"/><ellipse cx="13.5" cy="12" rx="4.5" ry="5.3" fill="#f0cdb5"/><path d="M9 12 Q8.5 5 13.5 5.3 Q17.5 5.5 18 8.5 Q14 7 11 9 L10.5 13Z" fill="#8a6a45"/>
        <path d="M4 24 L7 19 Q12 16.5 15 19 L19 24Z" fill="#e8a21c"/><path d="M10 19 L13 24 L17 24 L15 19Z" fill="#d23b1e"/></g></svg>
<div class="t" style="left:295.6px;top:366.7px;font-size:10.2px;color:#242424;">Daisy Philips</div>
<div class="t" style="left:295.6px;top:381.2px;font-size:10.45px;color:#242424;">Yoga Workshop</div>
<div class="t" style="right:518.5px;top:380.6px;font-size:10.0px;color:#424242;;transform:scaleX(0.8950);transform-origin:right center">9:16 AM</div>
<div class="t" style="left:295.6px;top:396.0px;font-size:10.45px;color:#616161;">Hey Katri, I know this is last minute, but do...</div>
<svg style="left:273.5px;top:430px" width="9" height="6" viewBox="0 0 9 6"><path d="M1 1 L4.5 4.5 L8 1" fill="none" stroke="#616161" stroke-width="1"/></svg>
<div class="t" style="left:295.6px;top:426.0px;font-size:10.2px;color:#616161;">Yesterday</div>
<div class="a" style="left:242px;top:445px;width:283px;height:60px;background:#f5f5f5;border-top:1px solid #e9e9e9"></div>
<svg style="left:253.8px;top:461.5px" width="6" height="9" viewBox="0 0 6 9"><path d="M1 1 L4.5 4.5 L1 8" fill="none" stroke="#616161" stroke-width="1"/></svg>
<svg style="left:265.5px;top:453.7px" width="24" height="24" viewBox="0 0 24 24"><defs><clipPath id="avamanda277465"><circle cx="12" cy="12" r="12"/></clipPath></defs><g clip-path="url(#avamanda277465)"><rect width="24" height="24" fill="#c5d0d0"/><path d="M6 14 Q5 4 12 4 Q18 4 18.5 11 L19 18 L16 20 L6 18Z" fill="#3a2520"/><ellipse cx="11.5" cy="11.5" rx="4.3" ry="5.2" fill="#e9c2ad"/>
        <path d="M3 24 Q5 17.5 12 18 Q19 18 21 24Z" fill="#e03a22"/><path d="M9 18 L12 23 L15 18Z" fill="#f5f0ee"/><ellipse cx="16.5" cy="16" rx="2.3" ry="3" fill="#4a2e22"/></g></svg>
<div class="t" style="left:295.6px;top:453.0px;font-size:10.2px;color:#242424;">Amanda Brady</div>
<div class="t" style="left:295.6px;top:467.8px;font-size:10.45px;color:#242424;">Apartment Parking Spot Opening</div>
<div class="t" style="right:518.5px;top:467.2px;font-size:10.0px;color:#424242;;transform:scaleX(0.8950);transform-origin:right center">1:18 PM</div>
<div class="t" style="left:295.6px;top:483.3px;font-size:10.34px;color:#616161;">Hey Katri, I hope this email finds you well. I...</div>
<div class="a" style="left:242px;top:505px;width:3px;height:59px;background:#0f6cbd;"></div>
<svg style="left:253.8px;top:521.0px" width="6" height="9" viewBox="0 0 6 9"><path d="M1 1 L4.5 4.5 L1 8" fill="none" stroke="#0f6cbd" stroke-width="1"/></svg>
<svg style="left:265.5px;top:513.0px" width="24" height="24" viewBox="0 0 24 24"><defs><clipPath id="avchris277525"><circle cx="12" cy="12" r="12"/></clipPath></defs><g clip-path="url(#avchris277525)"><rect width="24" height="24" fill="#5e8e2c"/><circle cx="4" cy="7" r="5" fill="#3d6a1e"/><circle cx="20" cy="6" r="4" fill="#8db43a"/><circle cx="20" cy="17" r="4.5" fill="#4a7a22"/><circle cx="3" cy="18" r="4" fill="#a8c44a"/>
        <ellipse cx="12" cy="13.5" rx="6" ry="7.6" fill="#6b4331"/><path d="M6 10 Q6.5 3.5 12 3.5 Q17.5 3.5 18 10 Q12 6.5 6 10Z" fill="#22283a"/><path d="M9 16.5 Q12 19.3 15 16.5Z" fill="#f4f4ef"/>
        <path d="M4 24 Q6 20.5 9 20.5 L15 20.5 Q18 20.5 20 24Z" fill="#2c62c6"/></g></svg>
<div class="t" style="left:295.6px;top:512.6px;font-size:10.2px;color:#242424;">Chris Naidoo</div>
<div class="t" style="left:295.6px;top:526.2px;font-size:10.90px;font-weight:400;-webkit-text-stroke:0.3px #115ea3;color:#115ea3;">Thanks for joining our networki...</div>
<div class="t" style="right:518.5px;top:526.6px;font-size:10.0px;font-weight:400;-webkit-text-stroke:0.3px #115ea3;color:#115ea3;;transform:scaleX(0.8910);transform-origin:right center">12:30 PM</div>
<svg style="left:484.5px;top:511.5px" width="13" height="13" viewBox="0 0 13 13"><path d="M9.2 10.9 Q8 11.7 6.5 11.7 Q1.3 11.7 1.3 6.5 Q1.3 1.3 6.5 1.3 Q11.7 1.3 11.7 6.2 Q11.7 8.8 9.8 8.8 Q8.6 8.8 8.6 7.5 L8.6 4.2 M8.6 6.5 Q8.6 8.7 6.5 8.7 Q4.4 8.7 4.4 6.5 Q4.4 4.3 6.5 4.3 Q8.6 4.3 8.6 6.5" fill="none" stroke="#0f6cbd" stroke-width="1.1"/></svg>
<div class="a" style="left:295.6px;top:541px;width:43.5px;height:15px;background:#e6e8ea;border:1px solid #c8ccd0;border-radius:3px"></div>
<div class="t" style="left:299.0px;top:541.3px;font-size:10.0px;color:#424242;;transform:scaleX(0.8600);transform-origin:left center">Outreach</div>
<div class="t" style="left:342.5px;top:542.0px;font-size:10.45px;color:#616161;">Hi Katri, we want to thank you fo...</div>
<!-- ML END -->
  <!-- reading card -->
  <div class="a" style="left:531px;top:108px;width:270px;height:281px;background:#fff;border-radius:4px;box-shadow:0 0.5px 1.5px rgba(0,0,0,.2)" id="rp"></div>
<!-- RP START -->
<div class="t" style="left:540.6px;top:116.8px;font-size:12.19px;font-weight:400;-webkit-text-stroke:0.3px #242424;color:#242424;">Event Announcement Content Creation</div>
<div class="a" style="left:759px;top:117.8px;width:40px;height:15px;background:#fcefd2;border:1px solid #f1cf8b;border-radius:3px"></div>
<div class="t" style="left:763.0px;top:118.3px;font-size:10.0px;color:#5a4718;;transform:scaleX(0.9800);transform-origin:left center">Planning</div>
<div class="a" style="left:531.5px;top:140px;width:250px;height:1px;background:#e6e6e6;"></div>
<svg style="left:539.8px;top:152.0px" width="30" height="30" viewBox="0 0 24 24"><defs><clipPath id="avmona30554167"><circle cx="12" cy="12" r="12"/></clipPath></defs><g clip-path="url(#avmona30554167)"><rect width="24" height="24" fill="#131313"/><ellipse cx="12.3" cy="13.6" rx="5.8" ry="7" fill="#e9c6ab"/><path d="M5.5 13 Q5.5 4.3 12.3 4.5 Q19 4.7 18.8 12 Q16.5 7.8 12 8.6 Q8.5 9.2 6.8 13Z" fill="#131313"/>
        <path d="M5 24 Q7.5 20.3 12.3 20.5 Q17 20.3 19.5 24Z" fill="#ecdcd0"/><rect x="4" y="22.6" width="16" height="1.6" fill="#9597bf"/></g></svg>
<div class="t" style="left:579.5px;top:153.2px;font-size:11.5px;color:#424242;">Mona Kane</div>
<div class="t" style="left:579.5px;top:171.2px;font-size:10.1px;color:#424242;">To:&nbsp; Katri Ahokas;&nbsp; Serena Davis;&nbsp; Chris Naidoo</div>
<div class="t" style="left:579.1px;top:198.0px;font-size:10.0px;color:#242424;">Hi team,</div>
<div class="t" style="left:579.1px;top:223.3px;font-size:10.0px;color:#242424;">I hope you're all doing well. Let's get together to</div>
<div class="t" style="left:579.1px;top:235.9px;font-size:10.0px;color:#242424;">anticipated upcoming event announcement. The</div>
<div class="t" style="left:579.1px;top:248.6px;font-size:10.0px;color:#242424;">call to action, and visual assets. Share your creative</div>
<div class="t" style="left:579.1px;top:261.0px;font-size:10.0px;color:#242424;">visually appealing content package.</div>
<div class="t" style="left:579.1px;top:286.5px;font-size:10.0px;color:#242424;">Looking forward to your input, and let's make</div>
<div class="t" style="left:579.1px;top:312.0px;font-size:10.0px;color:#242424;">Best regards,</div>
<div class="t" style="left:579.1px;top:324.9px;font-size:10.0px;color:#242424;">Mona</div>
<div class="a" style="left:579.1px;top:356.3px;width:66.4px;height:24px;background:#fff;border:1px solid #d1d1d1;border-radius:4px"></div>
<svg style="left:589px;top:362px" width="13" height="11" viewBox="0 0 13 11"><path d="M4.5 1 L1 4.5 L4.5 8 M1 4.5 L8 4.5 Q12 4.5 12 10" fill="none" stroke="#0f6cbd" stroke-width="1.05" stroke-linejoin="round"/></svg>
<div class="t" style="left:608.8px;top:361.0px;font-size:10.12px;font-weight:400;-webkit-text-stroke:0.3px #242424;color:#242424;">Reply</div>
<div class="a" style="left:649.4px;top:356.3px;width:79.4px;height:24px;background:#fff;border:1px solid #d1d1d1;border-radius:4px"></div>
<svg style="left:658px;top:362px" width="15" height="11" viewBox="0 0 15 11"><path d="M4 1 L0.8 4.5 L4 8 M7.5 1 L4 4.5 L7.5 8 M4 4.5 L10 4.5 Q14 4.5 14 10" fill="none" stroke="#0f6cbd" stroke-width="1.05" stroke-linejoin="round"/></svg>
<div class="t" style="left:679.4px;top:361.0px;font-size:10.27px;font-weight:400;-webkit-text-stroke:0.3px #242424;color:#242424;">Reply all</div>
<div class="a" style="left:733px;top:356.3px;width:71px;height:24px;background:#fff;border:1px solid #d1d1d1;border-radius:4px"></div>
<svg style="left:743px;top:362px" width="13" height="11" viewBox="0 0 13 11"><path d="M8.5 1 L12 4.5 L8.5 8 M12 4.5 L5 4.5 Q1 4.5 1 10" fill="none" stroke="#0f6cbd" stroke-width="1.05" stroke-linejoin="round"/></svg>
<div class="t" style="left:762.7px;top:361.0px;font-size:10.22px;font-weight:400;-webkit-text-stroke:0.3px #242424;color:#242424;">Forward</div>
<!-- RP END -->
  <!-- calendar pane -->
  <div class="a" style="left:781px;top:36px;width:239px;height:538px;background:#fff;border-top-left-radius:7px;box-shadow:-1px 0 2px rgba(0,0,0,.08)" id="cal"></div>
<!-- CAL START -->
<div class="t" style="left:793.4px;top:46.5px;font-size:10.27px;font-weight:400;-webkit-text-stroke:0.3px #242424;color:#242424;">Calendar</div>
<div class="a" style="left:793px;top:65.5px;width:42px;height:2.2px;background:#0f6cbd;border-radius:1px"></div>
<div class="t" style="left:849.4px;top:46.5px;font-size:10.57px;color:#424242;">To-Do</div>
<svg style="left:976.5px;top:47px" width="12" height="12" viewBox="0 0 12 12"><path d="M5 0.8 L9 0.8 Q11.2 0.8 11.2 3 L11.2 9 Q11.2 11.2 9 11.2 L3 11.2 Q0.8 11.2 0.8 9 L0.8 6.5 M0.8 3.5 L0.8 3 Q0.8 0.8 3 0.8" fill="none" stroke="#616161" stroke-width="0.95"/><path d="M6 6 L6 11.2 M6 6 L11.2 6" fill="none" stroke="#616161" stroke-width="0.95"/><path d="M2 2 L5 5 M2 2 L2 4.5 M2 2 L4.5 2" fill="none" stroke="#616161" stroke-width="0.95"/></svg>
<svg style="left:998.5px;top:48px" width="10" height="10" viewBox="0 0 10 10"><path d="M0.8 0.8 L9.2 9.2 M9.2 0.8 L0.8 9.2" stroke="#616161" stroke-width="1"/></svg>
<div class="t" style="left:793.4px;top:84.8px;font-size:13.11px;font-weight:400;-webkit-text-stroke:0.3px #242424;color:#242424;">November</div>
<svg style="left:862.5px;top:90.5px" width="9" height="6" viewBox="0 0 9 6"><path d="M1 1 L4.5 4.5 L8 1" fill="none" stroke="#616161" stroke-width="1"/></svg>
<div class="a" style="left:998.5px;top:91.5px;width:2px;height:2px;border-radius:1px;background:#242424"></div>
<div class="a" style="left:1002px;top:91.5px;width:2px;height:2px;border-radius:1px;background:#242424"></div>
<div class="a" style="left:1005.5px;top:91.5px;width:2px;height:2px;border-radius:1px;background:#242424"></div>
<div class="t" style="left:790.7px;width:20px;text-align:center;top:111px;font-size:10.0px;color:#616161;transform:scaleX(0.9000);transform-origin:center center">S</div>
<div class="t" style="left:824.3px;width:20px;text-align:center;top:111px;font-size:10.0px;color:#616161;transform:scaleX(0.9000);transform-origin:center center">M</div>
<div class="t" style="left:856.9px;width:20px;text-align:center;top:111px;font-size:10.0px;color:#616161;transform:scaleX(0.9000);transform-origin:center center">T</div>
<div class="t" style="left:890.2px;width:20px;text-align:center;top:111px;font-size:10.0px;color:#616161;transform:scaleX(0.9000);transform-origin:center center">W</div>
<div class="t" style="left:923.5px;width:20px;text-align:center;top:111px;font-size:10.0px;color:#616161;transform:scaleX(0.9000);transform-origin:center center">T</div>
<div class="t" style="left:957.1px;width:20px;text-align:center;top:111px;font-size:10.0px;color:#616161;transform:scaleX(0.9000);transform-origin:center center">F</div>
<div class="t" style="left:990.5px;width:20px;text-align:center;top:111px;font-size:10.0px;color:#616161;transform:scaleX(0.9000);transform-origin:center center">S</div>
<div class="a" style="left:858px;top:130.5px;width:18px;height:18px;border-radius:9px;background:#0f78d4"></div>
<div class="a" style="left:991.5px;top:130.5px;width:18px;height:18px;border-radius:9px;background:#f3f2f1"></div>
<div class="t" style="left:788.7px;width:24px;text-align:center;top:132px;font-size:10.6px;color:#424242">5</div>
<div class="t" style="left:822.3px;width:24px;text-align:center;top:132px;font-size:10.6px;color:#424242">6</div>
<div class="t" style="left:854.9px;width:24px;text-align:center;top:132px;font-size:10.60px;font-weight:400;-webkit-text-stroke:0.3px #fff;color:#fff">7</div>
<div class="t" style="left:888.2px;width:24px;text-align:center;top:132px;font-size:10.6px;color:#424242">8</div>
<div class="t" style="left:921.5px;width:24px;text-align:center;top:132px;font-size:10.6px;color:#424242">9</div>
<div class="t" style="left:955.1px;width:24px;text-align:center;top:132px;font-size:10.6px;color:#424242">10</div>
<div class="t" style="left:988.5px;width:24px;text-align:center;top:132px;font-size:10.6px;color:#424242">11</div>
<div class="t" style="left:793.4px;top:160.9px;font-size:10.54px;font-weight:400;-webkit-text-stroke:0.3px #242424;color:#242424;">Today • Tue, Nov 7</div>
<div class="a" style="left:795px;top:191px;width:4.5px;height:33.2px;background:#e3008c;border-radius:2px"></div>
<div class="t" style="left:805.7px;top:200.9px;font-size:10.0px;color:#616161;;transform:scaleX(0.8950);transform-origin:left center">All day</div>
<div class="t" style="left:852.0px;top:199.7px;font-size:10.66px;font-weight:400;-webkit-text-stroke:0.3px #242424;color:#242424;">Angela's Birthday</div>
<svg style="left:937.5px;top:202px" width="11" height="11" viewBox="0 0 11 11"><rect x="1" y="4.5" width="9" height="6" rx="1" fill="#f4eeea" stroke="#b9aaa5" stroke-width=".7"/><path d="M1 6.5 Q2.5 7.5 4 6.5 Q5.5 7.5 7 6.5 Q8.5 7.5 10 6.5" fill="none" stroke="#d98a8a" stroke-width=".8"/><path d="M3 4.5 L3 2.5 M5.5 4.5 L5.5 2 M8 4.5 L8 2.5" stroke="#c98" stroke-width=".7"/><circle cx="3" cy="1.8" r=".6" fill="#f0a030"/><circle cx="5.5" cy="1.3" r=".6" fill="#f0a030"/><circle cx="8" cy="1.8" r=".6" fill="#f0a030"/></svg>
<div class="a" style="left:795px;top:237.8px;width:4.5px;height:33.8px;background:#0f78d4;border-radius:2px"></div>
<div class="t" style="left:805.7px;top:240.1px;font-size:10.0px;color:#616161;;transform:scaleX(0.8850);transform-origin:left center">9:00 AM</div>
<div class="t" style="left:805.7px;top:255.1px;font-size:10.0px;color:#616161;;transform:scaleX(0.9400);transform-origin:left center">1h</div>
<div class="t" style="left:852.0px;top:239.4px;font-size:10.61px;font-weight:400;-webkit-text-stroke:0.3px #242424;color:#242424;">S&amp;M Strategy Update</div>
<div class="t" style="left:852.0px;top:255.1px;font-size:10.0px;color:#616161;;transform:scaleX(0.9010);transform-origin:left center">Microsoft Teams Meeting</div>
<div class="a" style="left:795px;top:284.6px;width:4.5px;height:33.9px;background:#0f78d4;border-radius:2px"></div>
<div class="t" style="left:805.7px;top:286.8px;font-size:10.0px;color:#616161;;transform:scaleX(0.9050);transform-origin:left center">11:00 AM</div>
<div class="t" style="left:805.7px;top:301.7px;font-size:10.0px;color:#616161;;transform:scaleX(0.9400);transform-origin:left center">30 min</div>
<div class="t" style="left:852.0px;top:286.1px;font-size:10.38px;font-weight:400;-webkit-text-stroke:0.3px #242424;color:#242424;">Lunch with Cassandra</div>
<div class="t" style="left:852.0px;top:301.7px;font-size:10.0px;color:#616161;;transform:scaleX(0.9010);transform-origin:left center">Fourth Coffee</div>
<div class="a" style="left:781px;top:324.7px;width:239px;height:148.1px;background:#f7f6f5;"></div>
<div class="a" style="left:795.3px;top:331.2px;width:73.7px;height:17.4px;background:#0f78d4;border-radius:9px"></div>
<svg style="left:805px;top:334px" width="12" height="12" viewBox="0 0 12 12"><circle cx="6" cy="6" r="4.8" fill="none" stroke="#fff" stroke-width="1"/><path d="M5.8 3.3 L5.8 6.3 L7.8 6.3" fill="none" stroke="#fff" stroke-width="1"/></svg>
<div class="t" style="left:819.5px;top:333.1px;font-size:10.0px;color:#fff;;transform:scaleX(0.9100);transform-origin:left center">in 39 min</div>
<div class="a" style="left:791px;top:356px;width:217.7px;height:103.3px;background:#fff;border-radius:5px;box-shadow:0 0.5px 1.5px rgba(0,0,0,.12)"></div>
<div class="a" style="left:795px;top:361.1px;width:4.5px;height:92.2px;background:#0f78d4;border-radius:2px"></div>
<div class="t" style="left:805.7px;top:366.3px;font-size:10.0px;color:#616161;;transform:scaleX(0.8750);transform-origin:left center">12:00 PM</div>
<div class="t" style="left:805.7px;top:383.5px;font-size:10.0px;color:#616161;;transform:scaleX(0.9400);transform-origin:left center">1h</div>
<div class="t" style="left:852.0px;top:365.7px;font-size:11.70px;font-weight:400;-webkit-text-stroke:0.3px #0f6cbd;color:#0f6cbd;">Group Sync</div>
<div class="t" style="left:852.0px;top:383.5px;font-size:10.0px;color:#616161;;transform:scaleX(0.9010);transform-origin:left center">Microsoft Teams Meeting</div>
<svg style="left:852.0px;top:402.1px" width="18" height="18" viewBox="0 0 24 24"><defs><clipPath id="avdaisy2861411"><circle cx="12" cy="12" r="12"/></clipPath></defs><g clip-path="url(#avdaisy2861411)"><rect width="24" height="24" fill="#cfe3f2"/><rect x="17" y="10" width="7" height="10" fill="#2f3f6a"/><path d="M4 24 L4.5 11 Q5 3.5 12 3.5 Q19 3.5 19 11 L19.5 24Z" fill="#1b1616"/><ellipse cx="12.8" cy="13.5" rx="4.6" ry="5.8" fill="#d9a98a"/><path d="M7.5 12 Q9 6.5 15.5 7 Q17.5 9 17.5 12 Q13 8.5 7.5 12Z" fill="#1b1616"/>
        <path d="M5 24 Q7 20.5 12.5 20.5 Q18 20.5 19.5 24Z" fill="#262626"/></g></svg>
<div class="t" style="left:876.0px;top:403.3px;font-size:10.0px;color:#616161;;transform:scaleX(0.8600);transform-origin:left center">Daisy Philips</div>
<svg style="left:948.5px;top:403.5px" width="10" height="10" viewBox="0 0 10 10"><path d="M8.5 4.5 L4.3 8.7 Q3 10 1.9 8.9 Q0.8 7.8 2.1 6.5 L6.8 1.8 Q7.7 0.9 8.5 1.7 Q9.3 2.5 8.4 3.4 L4 7.8" fill="none" stroke="#616161" stroke-width=".95"/></svg>
<svg style="left:974px;top:406px" width="10" height="10" viewBox="0 0 10 10"><path d="M8.5 4.5 L4.3 8.7 Q3 10 1.9 8.9 Q0.8 7.8 2.1 6.5 L6.8 1.8 Q7.7 0.9 8.5 1.7 Q9.3 2.5 8.4 3.4 L4 7.8" fill="none" stroke="#616161" stroke-width=".95"/></svg>
<svg style="left:988.5px;top:405.5px" width="11" height="11" viewBox="0 0 11 11"><path d="M2 7.5 A4 4 0 0 1 7.5 2 M9 3.5 A4 4 0 0 1 3.5 9" fill="none" stroke="#616161" stroke-width=".95"/><path d="M6 1 L7.8 2 L6.8 3.6 M5 10 L3.2 9 L4.2 7.4" fill="none" stroke="#616161" stroke-width=".95"/></svg>
<div class="a" style="left:805.7px;top:426px;width:195.8px;height:26.7px;background:#fff;border:1px solid #2f86d6;border-radius:4px"></div>
<svg style="left:856px;top:434.5px" width="12" height="11" viewBox="0 0 12 11"><circle cx="9.6" cy="2.4" r="1.4" fill="none" stroke="#424242" stroke-width=".8"/><path d="M7.5 4.6 L11.3 4.6 L11.3 7.5 Q11.3 9.5 9.4 9.5 Q8 9.5 7.5 8.5" fill="none" stroke="#424242" stroke-width=".8"/><circle cx="6.4" cy="2.2" r="1.7" fill="none" stroke="#424242" stroke-width=".8"/><rect x="0.5" y="2.6" width="7" height="7.2" rx="1" fill="#242424"/><path d="M2 4.4 L6 4.4 M4 4.4 L4 8.4" stroke="#fff" stroke-width="1"/></svg>
<div class="t" style="left:871.6px;top:432.2px;font-size:10.0px;font-weight:400;-webkit-text-stroke:0.3px #0f6cbd;color:#0f6cbd;;transform:scaleX(0.9140);transform-origin:left center">Join Teams meeting</div>
<div class="a" style="left:795px;top:479.9px;width:4.5px;height:33.6px;background:#0f78d4;border-radius:2px"></div>
<div class="t" style="left:805.7px;top:481.6px;font-size:10.0px;color:#616161;;transform:scaleX(0.8850);transform-origin:left center">4:30 PM</div>
<div class="t" style="left:805.7px;top:497.1px;font-size:10.0px;color:#616161;;transform:scaleX(0.9400);transform-origin:left center">1h</div>
<svg style="left:852.5px;top:483.5px" width="8" height="11" viewBox="0 0 8 11"><rect x="0.6" y="0.6" width="6.8" height="9.8" rx="1" fill="none" stroke="#616161" stroke-width=".95"/><path d="M2.5 3 L5.5 3 M2.5 5.5 L5.5 5.5 M2.5 8 L5.5 8" stroke="#616161" stroke-width=".8"/></svg>
<div class="t" style="left:863.7px;top:480.7px;font-size:10.74px;font-weight:400;-webkit-text-stroke:0.3px #242424;color:#242424;">Team Audit</div>
<div class="t" style="left:854.6px;top:497.1px;font-size:10.0px;color:#616161;;transform:scaleX(0.9010);transform-origin:left center">Microsoft Teams Meeting</div>
<div class="t" style="left:794.4px;top:525.8px;font-size:10.67px;font-weight:400;-webkit-text-stroke:0.3px #242424;color:#242424;">Tomorrow • Wed. Nov 8</div>
<div class="a" style="left:781px;top:538.9px;width:239px;height:40px;background:#fff;border-top-left-radius:10px;border-top-right-radius:10px;box-shadow:0 -0.5px 1.5px rgba(0,0,0,.14)"></div>
<svg style="left:794.5px;top:551px" width="11" height="11" viewBox="0 0 11 11"><path d="M5.5 0.5 L5.5 10.5 M0.5 5.5 L10.5 5.5" stroke="#0f6cbd" stroke-width="1.05"/></svg>
<div class="t" style="left:814.6px;top:549.6px;font-size:10.2px;color:#115ea3;">New event</div>
<!-- CAL END -->
  <div id="win2"></div>
</div>
</body></html>
